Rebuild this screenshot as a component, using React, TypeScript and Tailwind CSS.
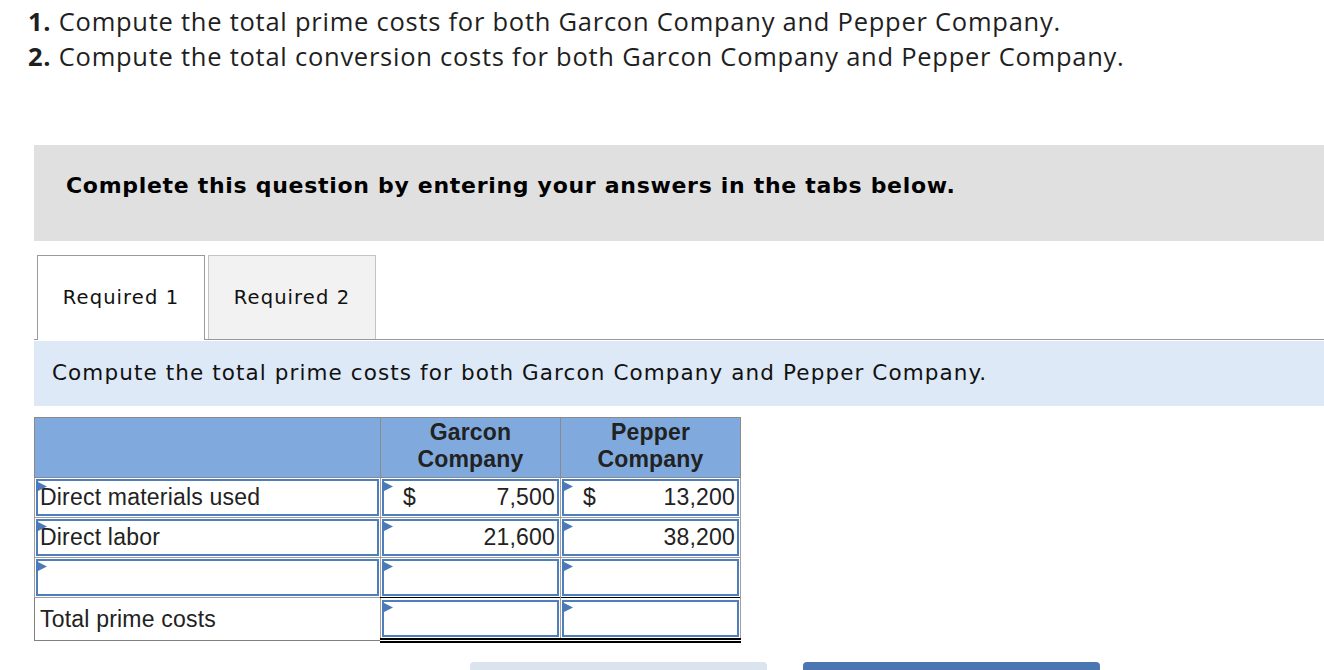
import React from "react";

const Tri = () => (
  <svg
    className="absolute z-10 left-[-2px] top-0 block w-[11px] h-[11px] max-w-none"
    width="11"
    height="11"
    viewBox="0 0 11 11"
  >
    <polygon points="0,0 11,5.5 0,11" fill="#4a7ab8" />
  </svg>
);

const Box = ({ children, tri = true }: { children?: React.ReactNode; tri?: boolean }) => (
  <div className="relative h-[37px] border-2 border-[#4f7ebc] flex items-center">
    {tri && <Tri />}
    {children}
  </div>
);

const Val = ({ dollar, v }: { dollar?: boolean; v: string }) => (
  <Box>
    <span className="pl-[19px] w-[40px]">{dollar ? "$" : ""}</span>
    <span className="flex-1 text-right pr-[2px]">{v}</span>
  </Box>
);

export default function App() {
  const tbl = "font-['Liberation_Sans',Arial,sans-serif] text-[23px] tracking-[0.2px] text-[#222]";
  return (
    <div className="w-[1324px] h-[670px] overflow-hidden bg-white relative">
      <div className="pt-[4px] pl-[28px] font-['Open_Sans',sans-serif] text-[25.5px] leading-[35px] text-[#1f1f1f] tracking-[0.75px]">
        <div>
          <b className="font-bold">1.</b> Compute the total prime costs for both Garcon Company and Pepper Company.
        </div>
        <div>
          <b className="font-bold">2.</b> Compute the total conversion costs for both Garcon Company and Pepper Company.
        </div>
      </div>

      <div className="ml-[34px] mt-[71px] h-[96px] bg-[#e0e0e0] pt-[27px] pl-[32px] font-['DejaVu_Sans',Verdana,sans-serif] font-bold text-[22px] leading-[28px] tracking-[0.7px] text-black">
        Complete this question by entering your answers in the tabs below.
      </div>

      <div className="ml-[34px] mt-[14px] border-b border-[#999] flex gap-[3px] pl-[3px] font-['DejaVu_Sans',Verdana,sans-serif] text-[19.5px] tracking-[1.1px] text-[#111]">
        <div className="w-[168px] h-[85px] mb-[-1px] bg-white border border-b-0 border-[#9a9a9a] flex items-center justify-center">
          Required 1
        </div>
        <div className="w-[168px] h-[84px] bg-[#f2f2f2] border border-b-0 border-[#c4c4c4] flex items-center justify-center">
          Required 2
        </div>
      </div>

      <div className="ml-[34px] mt-[1px] h-[65px] bg-[#dde9f6] flex items-center pl-[18px] font-['DejaVu_Sans',Verdana,sans-serif] text-[21.5px] tracking-[1.1px] text-[#111]">
        Compute the total prime costs for both Garcon Company and Pepper Company.
      </div>

      <table className={`ml-[34px] mt-[11px] border-collapse ${tbl}`}>
        <colgroup>
          <col className="w-[346px]" />
          <col className="w-[180px]" />
          <col className="w-[180px]" />
        </colgroup>
        <tbody>
          <tr className="h-[60px] bg-[#80aade]">
            <td className="border border-[#8a8a8a]"></td>
            <td className="border border-[#8a8a8a] text-center font-bold leading-[27px] pb-[3px]">
              Garcon
              <br />
              Company
            </td>
            <td className="border border-[#8a8a8a] text-center font-bold leading-[27px] pb-[3px]">
              Pepper
              <br />
              Company
            </td>
          </tr>
          <tr>
            <td className="border border-[#a0a0a0] p-px">
              <Box>
                <span className="pl-[2px]">Direct materials used</span>
              </Box>
            </td>
            <td className="border border-[#a0a0a0] p-px">
              <Val dollar v="7,500" />
            </td>
            <td className="border border-[#a0a0a0] p-px">
              <Val dollar v="13,200" />
            </td>
          </tr>
          <tr>
            <td className="border border-[#a0a0a0] p-px">
              <Box>
                <span className="pl-[2px]">Direct labor</span>
              </Box>
            </td>
            <td className="border border-[#a0a0a0] p-px">
              <Val v="21,600" />
            </td>
            <td className="border border-[#a0a0a0] p-px">
              <Val v="38,200" />
            </td>
          </tr>
          <tr>
            <td className="border border-[#a0a0a0] p-px">
              <Box />
            </td>
            <td className="border border-[#a0a0a0] border-b-black p-px">
              <Box />
            </td>
            <td className="border border-[#a0a0a0] border-b-black p-px">
              <Box />
            </td>
          </tr>
          <tr>
            <td className="border border-[#808080] h-[43px] pl-[5px] align-middle">Total prime costs</td>
            <td className="border border-[#a0a0a0] border-t-black border-b-[5px] border-b-black border-double p-px">
              <Box />
            </td>
            <td className="border border-[#a0a0a0] border-t-black border-b-[5px] border-b-black border-double p-px">
              <Box />
            </td>
          </tr>
        </tbody>
      </table>

      <div className="mt-[19px] flex">
        <div className="ml-[470px] w-[297px] h-[20px] rounded-t-[4px] bg-[#dbe3ee]" />
        <div className="ml-[36px] w-[297px] h-[20px] rounded-t-[4px] bg-[#4a76b2]" />
      </div>
    </div>
  );
}
